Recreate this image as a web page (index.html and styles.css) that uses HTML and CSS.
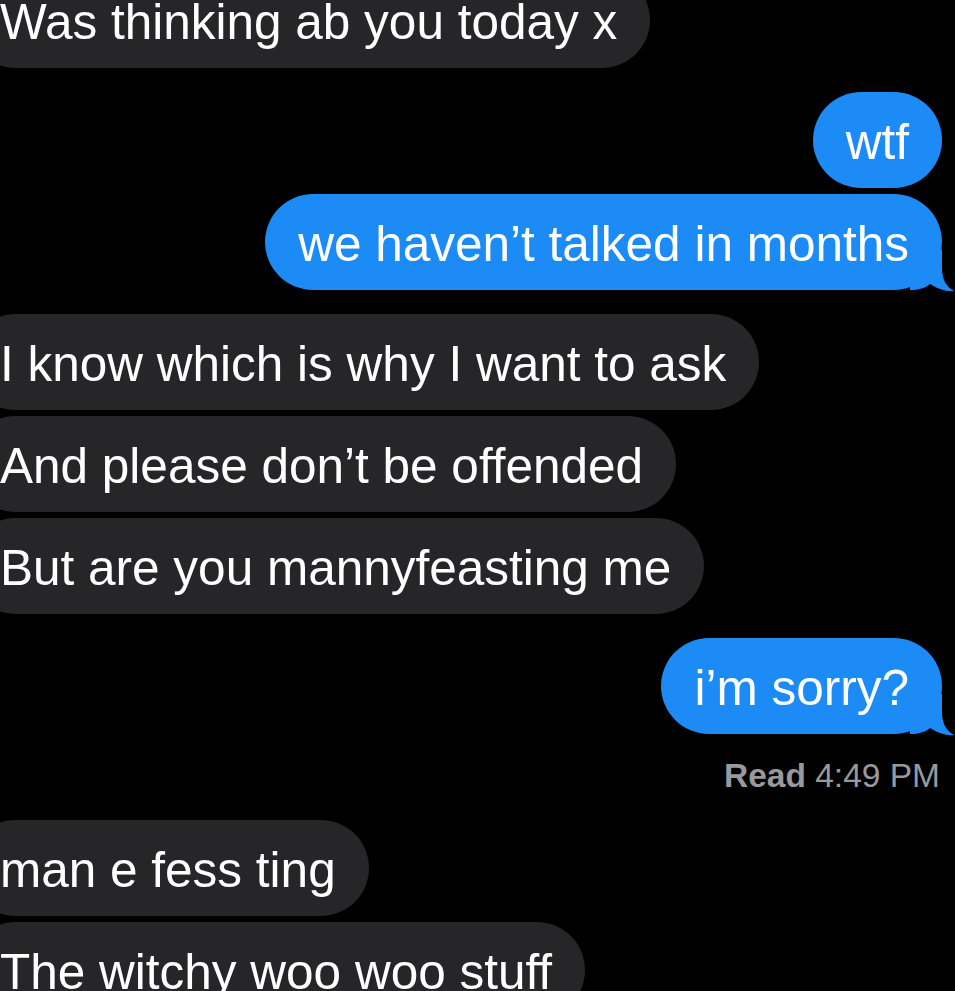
FILE: index.html
```html
<!DOCTYPE html>
<html>
<head>
<meta charset="utf-8">
<link rel="stylesheet" href="styles.css">
</head>
<body>
<div class="chat">
  <div class="group in">
    <div class="bubble gray">Was thinking ab you today x</div>
  </div>
  <div class="group out">
    <div class="bubble blue">wtf</div>
    <div class="bubble blue">we haven’t talked in months<svg class="tail" viewBox="0 0 45 42" width="45" height="42"><path d="M0 0 L32 0 L32 18 C32 29 36 37 44 41 C37 42 28 39 20 34 C15 38 9 40 0 40 Z"/></svg></div>
  </div>
  <div class="group in">
    <div class="bubble gray">I know which is why I want to ask</div>
    <div class="bubble gray">And please don’t be offended</div>
    <div class="bubble gray">But are you mannyfeasting me</div>
  </div>
  <div class="group out">
    <div class="bubble blue">i’m sorry?<svg class="tail" viewBox="0 0 45 42" width="45" height="42"><path d="M0 0 L32 0 L32 18 C32 29 36 37 44 41 C37 42 28 39 20 34 C15 38 9 40 0 40 Z"/></svg></div>
    <div class="receipt"><b>Read</b> 4:49 PM</div>
  </div>
  <div class="group in">
    <div class="bubble gray">man e fess ting</div>
    <div class="bubble gray">The witchy woo woo stuff</div>
  </div>
</div>
</body>
</html>
```
FILE: styles.css
```css
html, body {
  margin: 0;
  padding: 0;
  background: #000;
  overflow: hidden;
}
body {
  width: 955px;
  height: 991px;
  font-family: "Liberation Sans", Arial, sans-serif;
  color: #fff;
}
.chat {
  display: flex;
  flex-direction: column;
  gap: 24px;
  margin-top: -28px;
}
.group {
  display: flex;
  flex-direction: column;
  gap: 6px;
}
.group.in {
  align-items: flex-start;
  margin-left: -33px;
}
.group.out {
  align-items: flex-end;
  padding-right: 13px;
}
.bubble {
  position: relative;
  box-sizing: border-box;
  height: 96px;
  padding: 0 33px;
  line-height: 100px;
  font-size: 49.5px;
  border-radius: 48px;
  white-space: nowrap;
}
.gray {
  background: #262628;
}
.blue {
  background: #1c8bf6;
}
.tail {
  position: absolute;
  right: -13px;
  bottom: -2px;
  fill: #1c8bf6;
}
.receipt {
  margin-top: 18px;
  margin-bottom: 2px;
  margin-right: 2px;
  font-size: 33.5px;
  line-height: 36px;
  color: #98989d;
}
.receipt b {
  font-weight: 700;
}
```
